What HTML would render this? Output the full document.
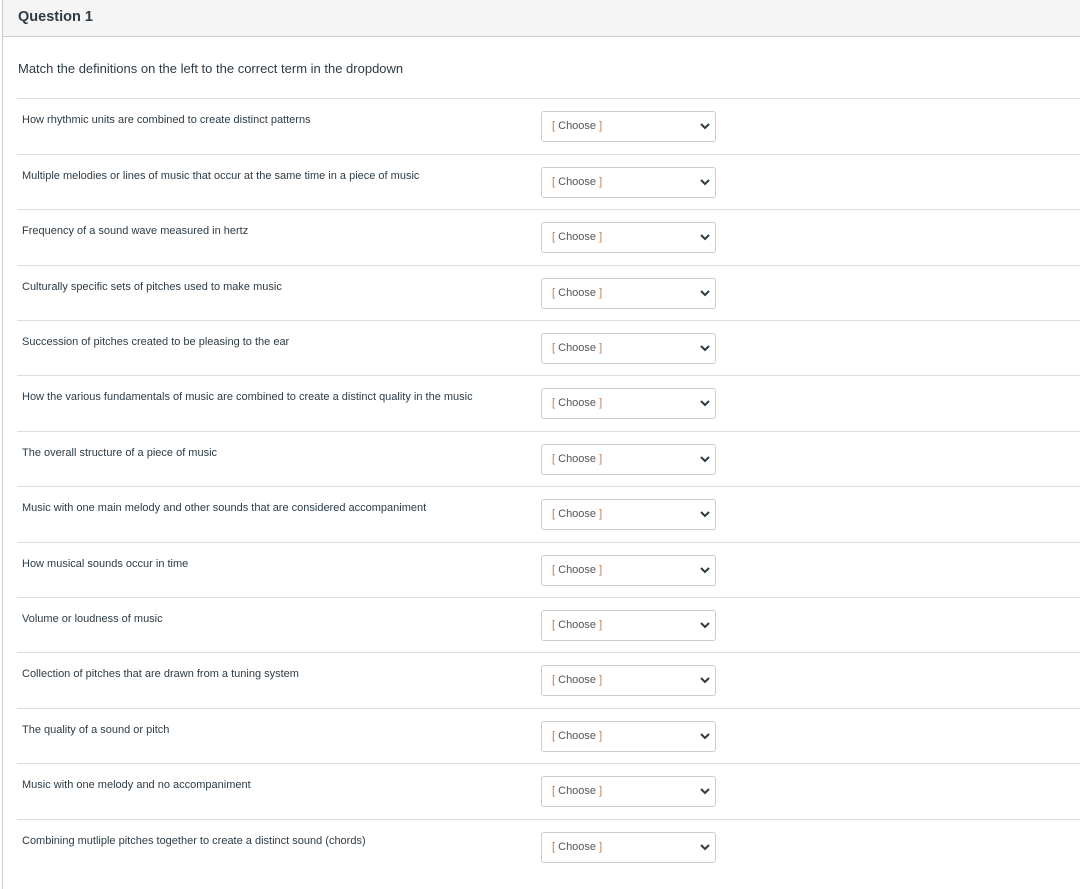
<!DOCTYPE html>
<html><head><style>
body{margin:0;width:1080px;height:889px;background:#fff;font-family:"Liberation Sans",sans-serif;color:#2d3b45;position:relative;overflow:hidden}
.hdr{position:absolute;left:2px;top:0;width:1078px;height:36px;background:#f5f5f5;border-bottom:1px solid #c7cdd1;border-left:1px solid #c7cdd1}
.hdr span{position:absolute;left:15px;top:9px;font-size:14.5px;font-weight:bold}
.lb{position:absolute;left:2px;top:36px;width:1px;height:853px;background:#c7cdd1}
.ins{position:absolute;left:18px;top:61px;font-size:13px}
.row{position:absolute;left:17px;width:1063px;height:55px;border-top:1px solid #dcdfe2}
.row .t{position:absolute;left:5px;top:15px;font-size:11px}
.sel{position:absolute;left:524px;top:12px;width:173px;height:29px;border:1px solid #c7cdd1;border-radius:3px;background:#fff}
.sel span{position:absolute;left:10px;top:8px;font-size:11px;color:#555}
.sel span b{color:#c77c47;font-weight:normal}
.sel svg{position:absolute;right:5px;top:10px}
</style></head><body>
<div class="hdr"><span>Question 1</span></div>
<div class="lb"></div>
<div class="ins">Match the definitions on the left to the correct term in the dropdown</div>
<div class="row" style="top:98px"><div class="t">How rhythmic units are combined to create distinct patterns</div><div class="sel"><span><b>[</b> Choose <b>]</b></span><svg width="10" height="8" viewBox="0 0 10 8"><path d="M1 2l4 4 4-4" stroke="#2d3b45" stroke-width="2" fill="none"/></svg></div></div>
<div class="row" style="top:154px"><div class="t">Multiple melodies or lines of music that occur at the same time in a piece of music</div><div class="sel"><span><b>[</b> Choose <b>]</b></span><svg width="10" height="8" viewBox="0 0 10 8"><path d="M1 2l4 4 4-4" stroke="#2d3b45" stroke-width="2" fill="none"/></svg></div></div>
<div class="row" style="top:209px"><div class="t">Frequency of a sound wave measured in hertz</div><div class="sel"><span><b>[</b> Choose <b>]</b></span><svg width="10" height="8" viewBox="0 0 10 8"><path d="M1 2l4 4 4-4" stroke="#2d3b45" stroke-width="2" fill="none"/></svg></div></div>
<div class="row" style="top:265px"><div class="t">Culturally specific sets of pitches used to make music</div><div class="sel"><span><b>[</b> Choose <b>]</b></span><svg width="10" height="8" viewBox="0 0 10 8"><path d="M1 2l4 4 4-4" stroke="#2d3b45" stroke-width="2" fill="none"/></svg></div></div>
<div class="row" style="top:320px"><div class="t">Succession of pitches created to be pleasing to the ear</div><div class="sel"><span><b>[</b> Choose <b>]</b></span><svg width="10" height="8" viewBox="0 0 10 8"><path d="M1 2l4 4 4-4" stroke="#2d3b45" stroke-width="2" fill="none"/></svg></div></div>
<div class="row" style="top:375px"><div class="t">How the various fundamentals of music are combined to create a distinct quality in the music</div><div class="sel"><span><b>[</b> Choose <b>]</b></span><svg width="10" height="8" viewBox="0 0 10 8"><path d="M1 2l4 4 4-4" stroke="#2d3b45" stroke-width="2" fill="none"/></svg></div></div>
<div class="row" style="top:431px"><div class="t">The overall structure of a piece of music</div><div class="sel"><span><b>[</b> Choose <b>]</b></span><svg width="10" height="8" viewBox="0 0 10 8"><path d="M1 2l4 4 4-4" stroke="#2d3b45" stroke-width="2" fill="none"/></svg></div></div>
<div class="row" style="top:486px"><div class="t">Music with one main melody and other sounds that are considered accompaniment</div><div class="sel"><span><b>[</b> Choose <b>]</b></span><svg width="10" height="8" viewBox="0 0 10 8"><path d="M1 2l4 4 4-4" stroke="#2d3b45" stroke-width="2" fill="none"/></svg></div></div>
<div class="row" style="top:542px"><div class="t">How musical sounds occur in time</div><div class="sel"><span><b>[</b> Choose <b>]</b></span><svg width="10" height="8" viewBox="0 0 10 8"><path d="M1 2l4 4 4-4" stroke="#2d3b45" stroke-width="2" fill="none"/></svg></div></div>
<div class="row" style="top:597px"><div class="t">Volume or loudness of music</div><div class="sel"><span><b>[</b> Choose <b>]</b></span><svg width="10" height="8" viewBox="0 0 10 8"><path d="M1 2l4 4 4-4" stroke="#2d3b45" stroke-width="2" fill="none"/></svg></div></div>
<div class="row" style="top:652px"><div class="t">Collection of pitches that are drawn from a tuning system</div><div class="sel"><span><b>[</b> Choose <b>]</b></span><svg width="10" height="8" viewBox="0 0 10 8"><path d="M1 2l4 4 4-4" stroke="#2d3b45" stroke-width="2" fill="none"/></svg></div></div>
<div class="row" style="top:708px"><div class="t">The quality of a sound or pitch</div><div class="sel"><span><b>[</b> Choose <b>]</b></span><svg width="10" height="8" viewBox="0 0 10 8"><path d="M1 2l4 4 4-4" stroke="#2d3b45" stroke-width="2" fill="none"/></svg></div></div>
<div class="row" style="top:763px"><div class="t">Music with one melody and no accompaniment</div><div class="sel"><span><b>[</b> Choose <b>]</b></span><svg width="10" height="8" viewBox="0 0 10 8"><path d="M1 2l4 4 4-4" stroke="#2d3b45" stroke-width="2" fill="none"/></svg></div></div>
<div class="row" style="top:819px"><div class="t">Combining mutliple pitches together to create a distinct sound (chords)</div><div class="sel"><span><b>[</b> Choose <b>]</b></span><svg width="10" height="8" viewBox="0 0 10 8"><path d="M1 2l4 4 4-4" stroke="#2d3b45" stroke-width="2" fill="none"/></svg></div></div>
</body></html>
